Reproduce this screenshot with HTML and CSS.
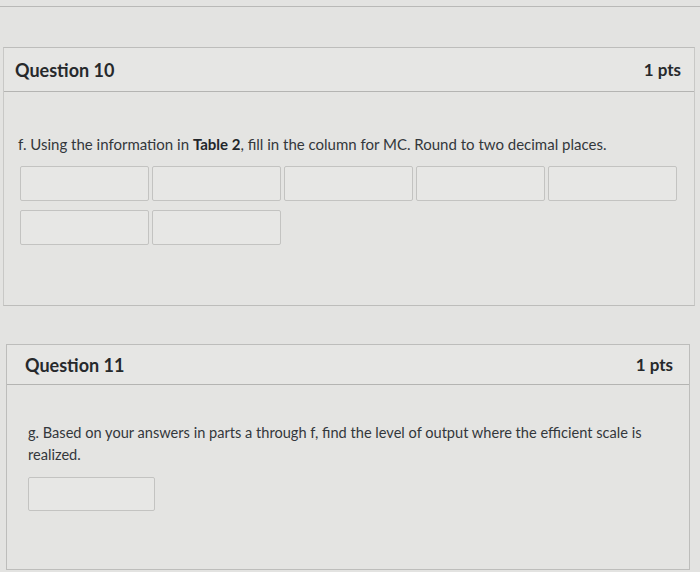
FILE: index.html
```html
<!DOCTYPE html>
<html>
<head>
<meta charset="utf-8">
<link rel="stylesheet" href="styles.css">
</head>
<body>
<div class="page">
  <div class="prev-end"></div>
  <section class="question q10">
    <header class="q-header">
      <h2 class="q-title">Question 10</h2>
      <span class="q-pts">1 pts</span>
    </header>
    <div class="q-body">
      <p class="q-text">f. Using the information in <b>Table 2</b>, fill in the column for MC. Round to two decimal places.</p>
      <div class="inputs">
        <div class="field"></div>
        <div class="field"></div>
        <div class="field"></div>
        <div class="field"></div>
        <div class="field"></div>
        <div class="field"></div>
        <div class="field"></div>
      </div>
    </div>
  </section>
  <section class="question q11">
    <header class="q-header">
      <h2 class="q-title">Question 11</h2>
      <span class="q-pts">1 pts</span>
    </header>
    <div class="q-body">
      <p class="q-text">g. Based on your answers in parts a through f, find the level of output where the efficient scale is realized.</p>
      <div class="field single"></div>
    </div>
  </section>
</div>
</body>
</html>
```
FILE: styles.css
```css
html, body {
  margin: 0;
  padding: 0;
}
body {
  background: #e3e3e1;
  font-family: Lato, "Open Sans", sans-serif;
  color: #2b2f33;
  width: 700px;
  height: 572px;
  overflow: hidden;
}
.page {
  display: flex;
  flex-direction: column;
}
.prev-end {
  height: 6px;
  border-bottom: 1px solid #b9b9b7;
  margin-bottom: 40px;
}
.question {
  border: 1px solid #bdbdbb;
  background: #e4e4e2;
}
.q10 {
  margin-left: 3px;
  width: 690px;
  height: 257px;
  border-left-color: #c8c8c6;
  border-right-color: #c8c8c6;
}
.q11 {
  margin-top: 38px;
  margin-left: 6px;
  width: 682px;
  height: 224px;
}
.q-header {
  display: flex;
  align-items: center;
  justify-content: space-between;
  height: 43px;
  border-bottom: 1px solid #b4b4b2;
  background: #e6e6e4;
}
.q10 .q-header {
  padding: 0 13px 0 11px;
}
.q11 .q-header {
  height: 39px;
  padding: 0 16px 0 18px;
}
.q-title {
  margin: 0;
  font-size: 18px;
  font-weight: 700;
  color: #26292c;
}
.q-pts {
  font-size: 17px;
  font-weight: 700;
  color: #26292c;
}
.q-body {
  display: flex;
  flex-direction: column;
}
.q10 .q-body {
  padding: 41px 8px 0 14px;
}
.q11 .q-body {
  padding: 37px 20px 0 21px;
}
.q-text {
  margin: 0;
  font-size: 15px;
  line-height: 22px;
  color: #33373b;
}
.q11 .q-text {
  font-size: 14.6px;
}
.q-text b {
  font-weight: 700;
  color: #22262a;
}
.inputs {
  display: grid;
  grid-template-columns: repeat(5, 129px);
  gap: 9px 3px;
  margin-top: 11px;
  margin-left: 2px;
}
.field {
  box-sizing: border-box;
  width: 129px;
  height: 35px;
  border: 1px solid #c3c3c1;
  border-radius: 2px;
  background: #e7e7e5;
}
.field.single {
  margin-top: 11px;
  width: 127px;
  height: 34px;
}
```
